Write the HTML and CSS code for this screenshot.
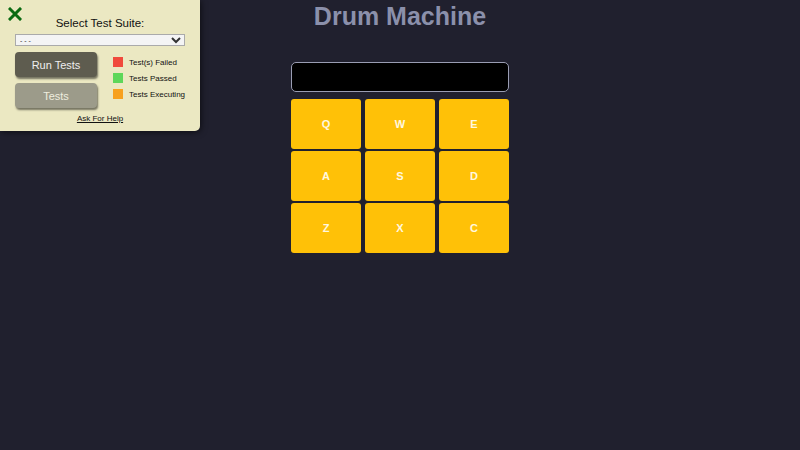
FILE: index.html
```html
<!DOCTYPE html>
<html lang="en">
<head>
    <meta charset="UTF-8">
    <meta name="viewport" content="width=device-width, initial-scale=1.0">
    <title>Drum Machine</title>
    <link rel="stylesheet" href="styles.css">
</head>
<body>
    <div class="test-panel">
        <div class="panel-top">
            <svg class="close-icon" width="14" height="14" viewBox="0 0 14 14">
                <path d="M2 2 L12 12 M12 2 L2 12" stroke="#0b6b12" stroke-width="3" stroke-linecap="square"/>
            </svg>
            <span class="suite-label">Select Test Suite:</span>
        </div>
        <select class="suite-select">
            <option>- - -</option>
        </select>
        <div class="panel-body">
            <div class="panel-buttons">
                <button class="run-btn">Run Tests</button>
                <button class="tests-btn">Tests</button>
            </div>
            <ul class="legend">
                <li><span class="swatch failed"></span>Test(s) Failed</li>
                <li><span class="swatch passed"></span>Tests Passed</li>
                <li><span class="swatch executing"></span>Tests Executing</li>
            </ul>
        </div>
        <a class="help-link" href="#">Ask For Help</a>
    </div>

    <div class="drum-machine" id="drum-machine">
        <h1>Drum Machine</h1>
        <div class="display" id="display"></div>
        <div class="pad-grid">
            <div class="drum-pad">Q</div>
            <div class="drum-pad">W</div>
            <div class="drum-pad">E</div>
            <div class="drum-pad">A</div>
            <div class="drum-pad">S</div>
            <div class="drum-pad">D</div>
            <div class="drum-pad">Z</div>
            <div class="drum-pad">X</div>
            <div class="drum-pad">C</div>
        </div>
    </div>
</body>
</html>
```

FILE: styles.css
```css
* {
    margin: 0;
    padding: 0;
    box-sizing: border-box;
}

body {
    min-height: 100vh;
    background: #20202e;
    font-family: 'Liberation Sans', Arial, sans-serif;
    position: relative;
}

/* test suite panel */
.test-panel {
    position: absolute;
    top: 0;
    left: 0;
    width: 200px;
    height: 131px;
    background: #ebe8c2;
    border-bottom-right-radius: 5px;
    box-shadow: 1px 1px 6px rgba(0, 0, 0, 0.6);
    padding: 7px 15px 0 15px;
    display: flex;
    flex-direction: column;
}

.panel-top {
    position: relative;
    height: 27px;
}

.close-icon {
    position: absolute;
    left: -7px;
    top: 0;
}

.suite-label {
    display: block;
    text-align: center;
    padding-top: 10px;
    font-size: 11.5px;
    color: #111;
}

.suite-select {
    width: 170px;
    height: 12px;
    font-size: 7px;
    background: #f4f4f4;
    border: 1px solid #aaa;
    color: #333;
    font-family: 'Liberation Sans', Arial, sans-serif;
}

.panel-body {
    display: flex;
    margin-top: 6px;
}

.panel-buttons {
    display: flex;
    flex-direction: column;
    gap: 6px;
}

.panel-buttons button {
    width: 82px;
    height: 25px;
    border: none;
    border-radius: 4px;
    font-size: 11px;
    font-family: 'Liberation Sans', Arial, sans-serif;
    box-shadow: 1px 2px 2px rgba(0, 0, 0, 0.5);
}

.run-btn {
    background: #5e5c4f;
    color: #eee;
}

.tests-btn {
    background: #9c9b8a;
    color: #eeedde;
}

.legend {
    list-style: none;
    margin-left: 16px;
    margin-top: 5px;
    display: flex;
    flex-direction: column;
    gap: 6px;
}

.legend li {
    display: flex;
    align-items: center;
    white-space: nowrap;
    font-size: 8px;
    color: #111;
    height: 10px;
}

.swatch {
    flex-shrink: 0;
    width: 10px;
    height: 10px;
    margin-right: 6px;
}

.swatch.failed {
    background: #f04a3c;
}

.swatch.passed {
    background: #5ed75a;
}

.swatch.executing {
    background: #f7a11e;
}

.help-link {
    display: block;
    text-align: center;
    margin-top: 6px;
    font-size: 8px;
    color: #111;
}

/* drum machine */
.drum-machine {
    width: 218px;
    margin: 0 auto;
    display: flex;
    flex-direction: column;
    align-items: center;
}

h1 {
    font-size: 25px;
    color: #8b90ab;
    font-weight: 700;
    margin-top: 2px;
    height: 60px;
}

.display {
    width: 218px;
    height: 30px;
    background: #000;
    border: 1.5px solid #9a9db3;
    border-radius: 5px;
}

.pad-grid {
    margin-top: 7px;
    display: grid;
    grid-template-columns: repeat(3, 70px);
    grid-auto-rows: 49.5px;
    gap: 2.5px 4px;
}

.drum-pad {
    background: #ffc107;
    border-radius: 3px;
    color: #fff8e0;
    font-weight: 700;
    font-size: 11px;
    display: flex;
    justify-content: center;
    align-items: center;
}
```
